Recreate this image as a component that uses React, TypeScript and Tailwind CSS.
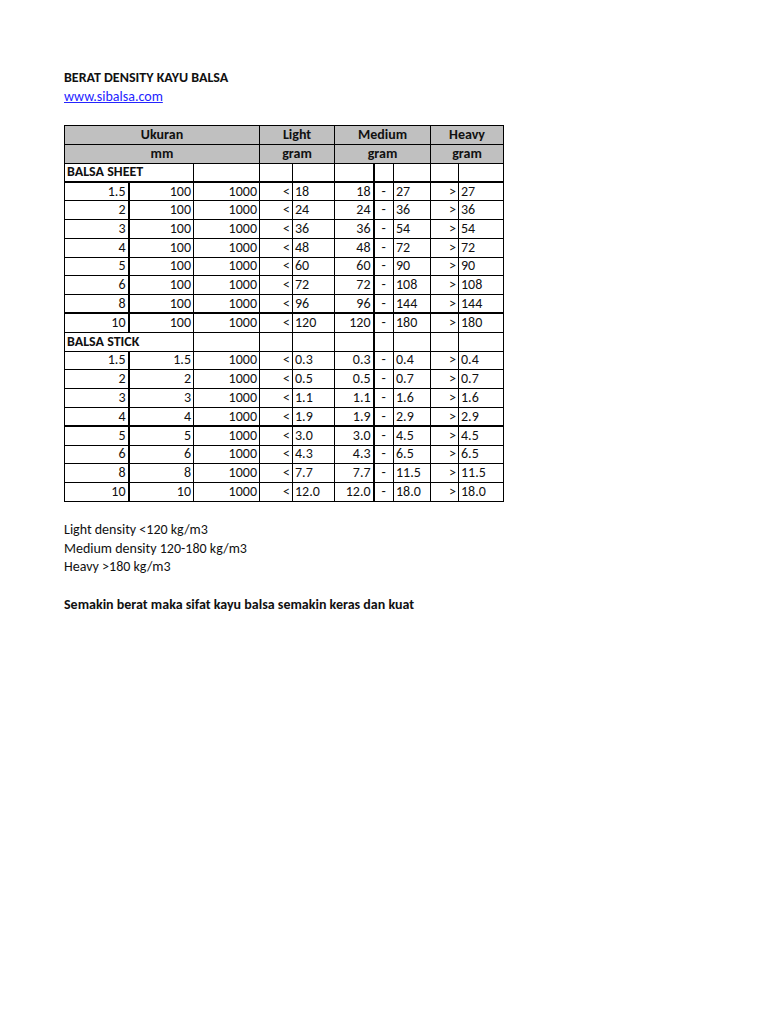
import React from 'react';
import clsx from 'clsx';

type Row = [string, string, string, string, string, string, string];

const sheet: Row[] = [
  ['1.5', '100', '1000', '18', '18', '27', '27'],
  ['2', '100', '1000', '24', '24', '36', '36'],
  ['3', '100', '1000', '36', '36', '54', '54'],
  ['4', '100', '1000', '48', '48', '72', '72'],
  ['5', '100', '1000', '60', '60', '90', '90'],
  ['6', '100', '1000', '72', '72', '108', '108'],
  ['8', '100', '1000', '96', '96', '144', '144'],
  ['10', '100', '1000', '120', '120', '180', '180'],
];

const stick: Row[] = [
  ['1.5', '1.5', '1000', '0.3', '0.3', '0.4', '0.4'],
  ['2', '2', '1000', '0.5', '0.5', '0.7', '0.7'],
  ['3', '3', '1000', '1.1', '1.1', '1.6', '1.6'],
  ['4', '4', '1000', '1.9', '1.9', '2.9', '2.9'],
  ['5', '5', '1000', '3.0', '3.0', '4.5', '4.5'],
  ['6', '6', '1000', '4.3', '4.3', '6.5', '6.5'],
  ['8', '8', '1000', '7.7', '7.7', '11.5', '11.5'],
  ['10', '10', '1000', '12.0', '12.0', '18.0', '18.0'],
];

const cell = 'border border-black px-[2px] leading-none';

function DataRow({ r, thickTop }: { r: Row; thickTop?: boolean }) {
  const t = thickTop && 'border-t-2';
  return (
    <tr className="h-[18.8px]">
      <td className={clsx(cell, 'border-r-2 text-right', t)}>{r[0]}</td>
      <td className={clsx(cell, 'text-right', t)}>{r[1]}</td>
      <td className={clsx(cell, 'text-right', t)}>{r[2]}</td>
      <td className={clsx(cell, 'text-right', t)}>&lt;</td>
      <td className={clsx(cell, 'text-left', t)}>{r[3]}</td>
      <td className={clsx(cell, 'border-r-2 text-right', t)}>{r[4]}</td>
      <td className={clsx(cell, 'text-center', t)}>-</td>
      <td className={clsx(cell, 'text-left', t)}>{r[5]}</td>
      <td className={clsx(cell, 'text-right', t)}>&gt;</td>
      <td className={clsx(cell, 'text-left', t)}>{r[6]}</td>
    </tr>
  );
}

function SectionRow({ label, thickBottom }: { label: string; thickBottom?: boolean }) {
  const b = thickBottom && 'border-b-2';
  return (
    <tr className="h-[18.8px]">
      <td colSpan={2} className={clsx(cell, 'font-bold text-left', b)}>
        {label}
      </td>
      <td className={clsx(cell, b)} />
      <td className={clsx(cell, b)} />
      <td className={clsx(cell, b)} />
      <td className={clsx(cell, 'border-r-2', b)} />
      <td className={clsx(cell, b)} />
      <td className={clsx(cell, b)} />
      <td className={clsx(cell, b)} />
      <td className={clsx(cell, b)} />
    </tr>
  );
}

export default function App() {
  return (
    <div
      className="min-h-screen bg-white text-[#111] text-[14px] pl-[64px] pt-[68px]"
      style={{ fontFamily: 'Carlito, Calibri, Lato, "Liberation Sans", sans-serif' }}
    >
      <div className="font-bold leading-[19px]">BERAT DENSITY KAYU BALSA</div>
      <div className="leading-[19px]">
        <a href="#" className="text-[#2424ff] underline">
          www.sibalsa.com
        </a>
      </div>

      <table className="mt-[19px] table-fixed border-collapse w-[439px]">
        <colgroup>
          <col className="w-[64px]" />
          <col className="w-[65px]" />
          <col className="w-[66px]" />
          <col className="w-[33px]" />
          <col className="w-[42px]" />
          <col className="w-[39px]" />
          <col className="w-[20px]" />
          <col className="w-[37px]" />
          <col className="w-[28px]" />
          <col className="w-[45px]" />
        </colgroup>
        <tbody>
          <tr className="h-[18.8px] bg-[#c0c0c0] font-bold">
            <td colSpan={3} className={clsx(cell, 'text-center')}>Ukuran</td>
            <td colSpan={2} className={clsx(cell, 'text-center')}>Light</td>
            <td colSpan={3} className={clsx(cell, 'text-center')}>Medium</td>
            <td colSpan={2} className={clsx(cell, 'text-center')}>Heavy</td>
          </tr>
          <tr className="h-[18.8px] bg-[#c0c0c0] font-bold">
            <td colSpan={3} className={clsx(cell, 'text-center')}>mm</td>
            <td colSpan={2} className={clsx(cell, 'text-center')}>gram</td>
            <td colSpan={3} className={clsx(cell, 'text-center')}>gram</td>
            <td colSpan={2} className={clsx(cell, 'text-center')}>gram</td>
          </tr>
          <SectionRow label="BALSA SHEET" thickBottom />
          {sheet.map((r, i) => (
            <DataRow key={'s' + i} r={r} thickTop={i === 7} />
          ))}
          <SectionRow label="BALSA STICK" />
          {stick.map((r, i) => (
            <DataRow key={'k' + i} r={r} thickTop={i === 4} />
          ))}
        </tbody>
      </table>

      <div className="mt-[19px] leading-[18.7px]">
        <div>Light density &lt;120 kg/m3</div>
        <div>Medium density 120-180 kg/m3</div>
        <div>Heavy &gt;180 kg/m3</div>
        <div className="h-[18.7px]" />
        <div className="font-bold">Semakin berat maka sifat kayu balsa semakin keras dan kuat</div>
      </div>
    </div>
  );
}
